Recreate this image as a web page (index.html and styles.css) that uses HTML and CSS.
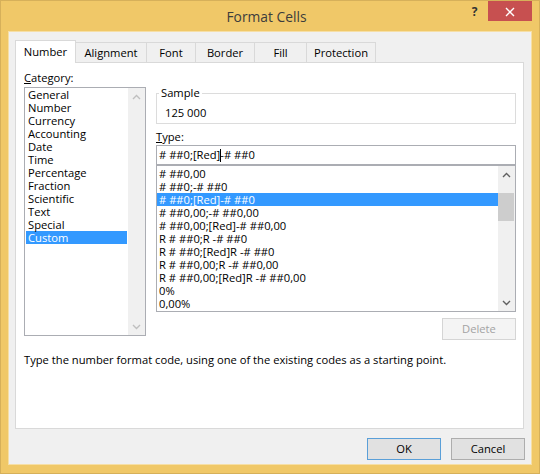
FILE: index.html
```html
<!DOCTYPE html>
<html>
<head>
<meta charset="utf-8">
<link rel="stylesheet" href="styles.css">
</head>
<body>
<div class="window">
  <div class="titlebar">
    <div class="spacer"></div>
    <div class="title">Format Cells</div>
    <div class="controls">
      <div class="help">?</div>
      <div class="close">
        <svg width="10" height="10" viewBox="0 0 10 10"><path d="M1 1 L9 9 M9 1 L1 9" stroke="#fff" stroke-width="1.4" fill="none"/></svg>
      </div>
    </div>
  </div>
  <div class="client">
    <div class="tabs">
      <div class="tab active">Number</div>
      <div class="tab">Alignment</div>
      <div class="tab">Font</div>
      <div class="tab">Border</div>
      <div class="tab">Fill</div>
      <div class="tab">Protection</div>
    </div>
    <div class="panel">
      <div class="columns">
        <div class="left">
          <div class="label"><u>C</u>ategory:</div>
          <div class="listbox catlist">
            <div class="items">
              <div class="item">General</div>
              <div class="item">Number</div>
              <div class="item">Currency</div>
              <div class="item">Accounting</div>
              <div class="item">Date</div>
              <div class="item">Time</div>
              <div class="item">Percentage</div>
              <div class="item">Fraction</div>
              <div class="item">Scientific</div>
              <div class="item">Text</div>
              <div class="item">Special</div>
              <div class="item selected">Custom</div>
            </div>
            <div class="scrollbar disabled">
              <div class="arrow"><svg width="9" height="6" viewBox="0 0 9 6"><polyline points="1,5 4.5,1.5 8,5" fill="none" stroke="currentColor" stroke-width="1.4"/></svg></div>
              <div class="track"></div>
              <div class="arrow"><svg width="9" height="6" viewBox="0 0 9 6"><polyline points="1,1 4.5,4.5 8,1" fill="none" stroke="currentColor" stroke-width="1.4"/></svg></div>
            </div>
          </div>
        </div>
        <div class="right">
          <fieldset class="sample">
            <legend>Sample</legend>
            <div class="sample-value">125 000</div>
          </fieldset>
          <div class="label type-label"><u>T</u>ype:</div>
          <div class="input"># ##0;[Red]<span class="caret"></span>-# ##0</div>
          <div class="listbox typelist">
            <div class="items">
              <div class="item"># ##0,00</div>
              <div class="item"># ##0;-# ##0</div>
              <div class="item selected"># ##0;[Red]-# ##0</div>
              <div class="item"># ##0,00;-# ##0,00</div>
              <div class="item"># ##0,00;[Red]-# ##0,00</div>
              <div class="item">R # ##0;R -# ##0</div>
              <div class="item">R # ##0;[Red]R -# ##0</div>
              <div class="item">R # ##0,00;R -# ##0,00</div>
              <div class="item">R # ##0,00;[Red]R -# ##0,00</div>
              <div class="item">0%</div>
              <div class="item">0,00%</div>
            </div>
            <div class="scrollbar">
              <div class="arrow"><svg width="9" height="6" viewBox="0 0 9 6"><polyline points="1,5 4.5,1.5 8,5" fill="none" stroke="currentColor" stroke-width="1.4"/></svg></div>
              <div class="track"><div class="thumb"></div></div>
              <div class="arrow"><svg width="9" height="6" viewBox="0 0 9 6"><polyline points="1,1 4.5,4.5 8,1" fill="none" stroke="currentColor" stroke-width="1.4"/></svg></div>
            </div>
          </div>
          <div class="delete-row">
            <div class="button disabled">Delete</div>
          </div>
        </div>
      </div>
      <div class="description">Type the number format code, using one of the existing codes as a starting point.</div>
    </div>
    <div class="footer">
      <div class="button default">OK</div>
      <div class="button">Cancel</div>
    </div>
  </div>
</div>
</body>
</html>
```
FILE: styles.css
```css
* { box-sizing: border-box; }
html, body { margin: 0; padding: 0; background: #ffffff; }
body {
  font-family: "Open Sans", "Noto Sans", sans-serif;
  font-size: 11.2px;
  color: #000;
}
.window {
  width: 540px;
  height: 474px;
  background: #f0c868;
  border: 1px solid #d6b05a;
  padding: 0 7px 8px 7px;
  display: flex;
  flex-direction: column;
}
.titlebar {
  height: 30px;
  display: grid;
  grid-template-columns: 1fr auto 1fr;
  align-items: start;
  margin: 0 -7px 0 -7px;
  padding-right: 7px;
}
.title {
  font-size: 13.8px;
  color: #3c3c3c;
  padding-top: 6px;
  line-height: 20px;
}
.controls {
  justify-self: end;
  display: flex;
}
.help {
  width: 27px;
  height: 20px;
  font-weight: bold;
  font-size: 12px;
  color: #333;
  text-align: center;
  line-height: 22px;
}
.close {
  width: 44px;
  height: 20px;
  background: #c75050;
  display: flex;
  align-items: center;
  justify-content: center;
  padding-top: 1px;
}
.client {
  flex: 1;
  background: #f0f0f0;
  border: 1px solid #f6dfa6;
  display: flex;
  flex-direction: column;
  padding: 8px 6px 0 6px;
}
.tabs {
  display: flex;
  align-items: flex-end;
  height: 22px;
}
.tab {
  height: 20px;
  border: 1px solid #d9d9d9;
  border-bottom: none;
  background: #f0f0f0;
  margin-right: -1px;
  text-align: center;
  line-height: 19px;
  white-space: nowrap;
}
.tab:nth-child(1) { width: 61px; }
.tab:nth-child(2) { width: 72px; }
.tab:nth-child(3) { width: 50px; }
.tab:nth-child(4) { width: 60px; }
.tab:nth-child(5) { width: 53px; }
.tab:nth-child(6) { width: 70px; }
.tab.active {
  height: 23px;
  background: #fff;
  margin-bottom: -1px;
  position: relative;
  z-index: 1;
  line-height: 21px;
}
.panel {
  height: 367px;
  width: 509px;
  background: #fff;
  border: 1px solid #d9d9d9;
  padding: 8px 6px 0 8px;
}
.columns {
  display: grid;
  grid-template-columns: 122px 360px;
  column-gap: 10px;
  align-items: start;
}
.label {
  line-height: 14px;
  height: 14px;
}
.left .label { margin-bottom: 2px; }
.listbox {
  border: 1px solid #abadb3;
  display: flex;
  background: #fff;
}
.catlist { height: 249px; }
.typelist { height: 147px; }
.items {
  flex: 1;
  overflow: hidden;
}
.item {
  line-height: 13px;
  height: 13px;
  white-space: nowrap;
  padding-left: 2px;
}
.catlist .item { margin: 0 1px; padding-left: 2px; }
.typelist .items { padding-top: 1px; }
.item.selected {
  background: #3399ff;
  color: #fff;
}
.scrollbar {
  width: 17px;
  background: #f0f0f0;
  display: flex;
  flex-direction: column;
  color: #606060;
}
.scrollbar.disabled { color: #bfbfbf; }
.arrow {
  height: 17px;
  display: flex;
  align-items: center;
  justify-content: center;
}
.track {
  flex: 1;
  padding-top: 10px;
}
.thumb {
  height: 28px;
  margin: 0 1px 0 0;
  background: #cdcdcd;
}
.right { margin-top: 16px; }
.sample {
  margin: 0;
  border: 1px solid #dcdcdc;
  padding: 7px 8px 4px 8px;
}
.sample legend {
  padding: 0 2px;
  margin-left: -6px;
  line-height: 12px;
  color: #000;
}
.sample-value { line-height: 13px; }
.type-label { margin-top: 6px; }
.input {
  margin-top: 1px;
  height: 20px;
  border: 1px solid #abadb3;
  padding-left: 2px;
  line-height: 18px;
  white-space: nowrap;
}
.caret {
  display: inline-block;
  width: 1px;
  height: 13px;
  background: #000;
  vertical-align: -3px;
  margin-right: -1px;
}
.delete-row {
  display: flex;
  justify-content: flex-end;
  margin-top: 6px;
}
.button {
  width: 74px;
  height: 22px;
  border: 1px solid #adadad;
  background: #e1e1e1;
  text-align: center;
  line-height: 20px;
}
.button.disabled {
  background: #f4f4f4;
  border-color: #d5d5d5;
  color: #a3a3a3;
}
.button.default {
  border-color: #5a9fd8;
}
.description {
  margin-top: 13px;
  line-height: 14px;
}
.footer {
  display: flex;
  justify-content: flex-end;
  gap: 10px;
  margin-top: 9px;
  padding-right: 0;
}
```
